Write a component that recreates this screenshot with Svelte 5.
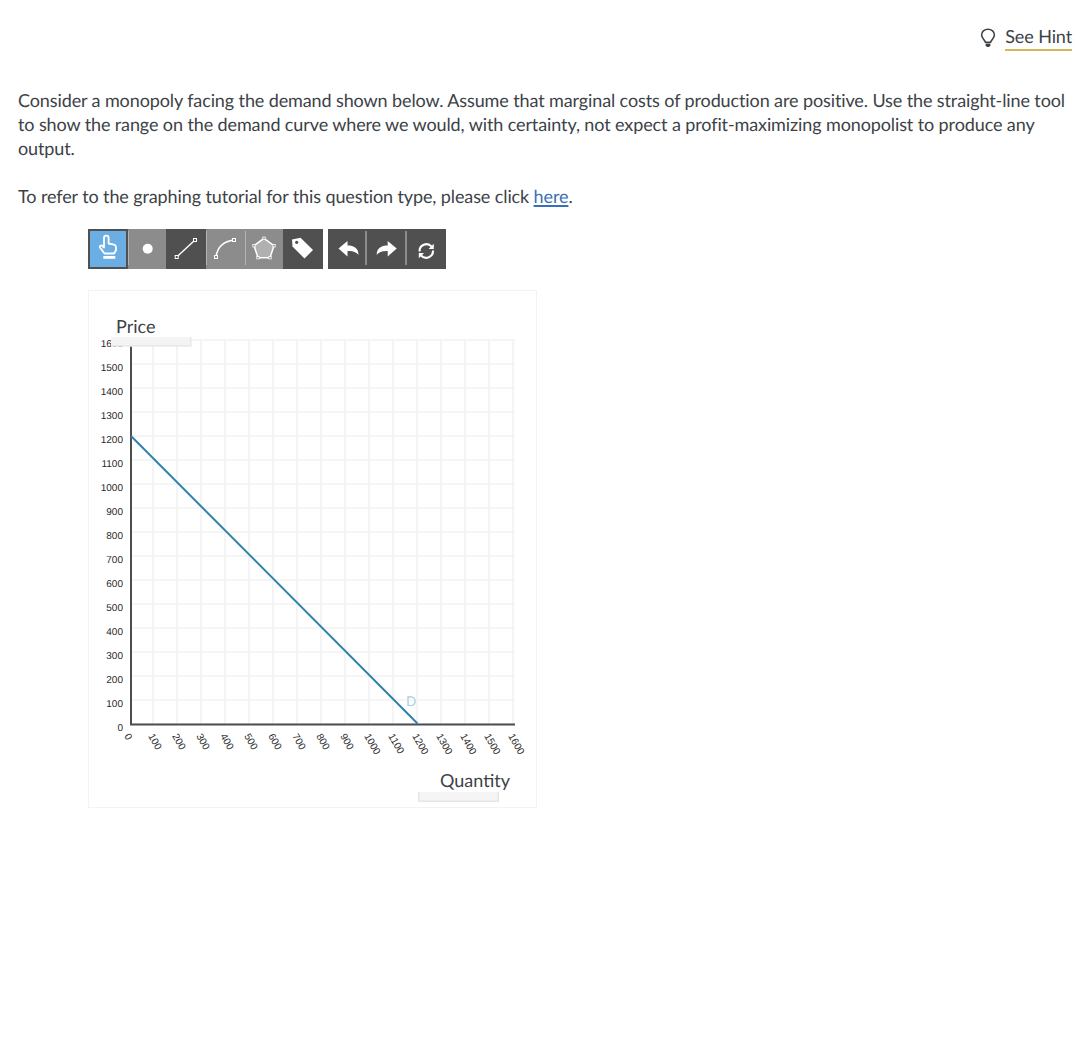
<script>
  const vals = Array.from({ length: 17 }, (_, i) => i * 100);
  const px = (v) => 41 + v * 0.24;
  const py = (v) => 434 - v * 0.24;
</script>

<div class="page">
  <div class="hint-row">
    <a class="hint" href="#hint">
      <svg class="bulb" width="16" height="20" viewBox="0 0 16 20" aria-hidden="true">
        <path d="M5.400 14.200C5 11.800 1.600 10.400 1.600 7 1.600 3.600 4.400 1.200 8 1.200S14.400 3.600 14.400 7c0 3.400-3.400 4.800-3.800 7.200z" fill="none" stroke="#3d4247" stroke-width="1.600" />
        <path d="M5.600 15.600h4.800v1.600L9.200 19H6.800L5.600 17.200z" fill="#3d4247" />
      </svg>
      <span class="hint-text">See Hint</span>
    </a>
  </div>

  <p class="question">Consider a monopoly facing the demand shown below. Assume that marginal costs of production are positive. Use the straight-line tool to show the range on the demand curve where we would, with certainty, not expect a profit-maximizing monopolist to produce any output.</p>
  <p class="tutorial">To refer to the graphing tutorial for this question type, please click <a href="#here">here</a>.</p>

  <div class="toolbar">
    <div class="group tools">
      <div class="btn w40">
        <svg width="40" height="40" viewBox="0 0 40 40">
          <rect x="2" y="2" width="36" height="36" fill="#6aaee4" />
          <path d="M16.500 24.500 12 18.500c-1-1.500 1-3 2.500-1.500L16 18.500V9a2.300 2.300 0 0 1 4.600 0V14.500l5.400 1.200c1.400.4 2 1 2 2.500v3l-2 3.300z" fill="#6aaee4" stroke="#fff" stroke-width="1.800" stroke-linejoin="round" />
          <rect x="15.300" y="27" width="12" height="2.800" fill="#fff" />
        </svg>
      </div>
      <div class="btn w38 gray edge">
        <svg width="38" height="40" viewBox="0 0 38 40"><circle cx="19.700" cy="19.700" r="5" fill="#fff" /></svg>
      </div>
      <div class="btn w40">
        <svg width="40" height="40" viewBox="0 0 40 40">
          <line x1="10.700" y1="28" x2="29" y2="11" stroke="#fff" stroke-width="1.400" />
          <rect x="9.200" y="26.500" width="3" height="3" fill="#505050" stroke="#fff" />
          <rect x="27.500" y="9.500" width="3" height="3" fill="#505050" stroke="#fff" />
        </svg>
      </div>
      <div class="btn w39 gray edge">
        <svg width="39" height="40" viewBox="0 0 39 40">
          <path d="M10 28Q12 13 28 11" fill="none" stroke="#fff" stroke-width="1.500" />
          <rect x="8.500" y="26.500" width="3" height="3" fill="#8c8c8c" stroke="#fff" />
          <rect x="26.500" y="9.500" width="3" height="3" fill="#8c8c8c" stroke="#fff" />
        </svg>
      </div>
      <div class="btn w38 gray edge">
        <svg width="38" height="40" viewBox="0 0 38 40">
          <path d="M19 9.300 29 16.700 25 28.700H13L9 16.700z" fill="#b0b0b0" stroke="#fff" stroke-width="1.500" />
          <rect x="17.800" y="8.100" width="2.400" height="2.400" fill="#8c8c8c" stroke="#fff" stroke-width=".8" />
          <rect x="27.800" y="15.500" width="2.400" height="2.400" fill="#8c8c8c" stroke="#fff" stroke-width=".8" />
          <rect x="23.800" y="27.500" width="2.400" height="2.400" fill="#8c8c8c" stroke="#fff" stroke-width=".8" />
          <rect x="11.800" y="27.500" width="2.400" height="2.400" fill="#8c8c8c" stroke="#fff" stroke-width=".8" />
          <rect x="7.800" y="15.500" width="2.400" height="2.400" fill="#8c8c8c" stroke="#fff" stroke-width=".8" />
        </svg>
      </div>
      <div class="btn w40">
        <svg width="40" height="40" viewBox="0 0 40 40">
          <path d="M9 10.500 17.500 8.800 30 21 21.500 29.500 9.500 17.500z" fill="#fff" />
          <circle cx="13.700" cy="13.300" r="1.600" fill="#505050" />
        </svg>
      </div>
    </div>
    <div class="group actions">
      <div class="btn act sep">
        <svg width="38" height="40" viewBox="0 0 38 40">
          <path d="M10.500 19.500 19.500 12v4.500C26 16.500 30.500 19 30.500 26 28 22.500 24 22 19.500 22v5.500z" fill="#fff" />
        </svg>
      </div>
      <div class="btn act sep">
        <svg width="38" height="40" viewBox="0 0 38 40">
          <path d="M29.700 19.500 20.700 12v4.500C14.200 16.500 9.700 19 9.700 26 12.200 22.500 16.200 22 20.700 22v5.500z" fill="#fff" />
        </svg>
      </div>
      <div class="btn act">
        <svg width="38" height="40" viewBox="0 0 38 40">
          <path d="M12.600 22.500A6.800 6.800 0 0 1 24.500 17.500" fill="none" stroke="#fff" stroke-width="2.100" />
          <path d="M26.800 14.800V20H21.600z" fill="#fff" />
          <path d="M26 21.500A6.800 6.800 0 0 1 14.100 26.500" fill="none" stroke="#fff" stroke-width="2.100" />
          <path d="M11.800 29.200V24H17z" fill="#fff" />
        </svg>
      </div>
    </div>
  </div>

  <div class="graph-card">
    <svg width="449" height="518" viewBox="0 0 449 518">
      <g stroke="#f2f2f2" stroke-width="1.700">
        {#each vals as v}
          <line x1={43} x2={427} y1={py(v)} y2={py(v)} />
          {#if v > 0}<line x1={px(v)} x2={px(v)} y1={50} y2={434} />{/if}
        {/each}
      </g>
      <line x1="43" y1="50" x2="43" y2="435" stroke="#4d4d4d" stroke-width="2" />
      <line x1="42" y1="434.500" x2="427" y2="434.500" stroke="#4d4d4d" stroke-width="2" />
      <line x1="43" y1="146" x2="329.500" y2="433.500" stroke="#2f83ab" stroke-width="2" />
      <text x="318" y="415.700" class="d">D</text>
      {#each vals as v}
        <text x="35" y={py(v) + 7} class="tick" text-anchor="end">{v}</text>
      {/each}
      {#each vals as v}
        <text class="tick" transform={`translate(${px(v) - 5},${446}) rotate(60)`}>{v}</text>
      {/each}
      <rect x="23" y="47" width="80" height="9.500" fill="#f4f4f4" />
      <path d="M23 55.800H102.800V47" fill="none" stroke="#e8e8e8" stroke-width="1.500" />
      <text x="28" y="43" class="axis-title">Price</text>
      <rect x="330" y="502" width="81" height="10" fill="#f5f5f5" />
      <path d="M330.700 502V511.300H410.300V502" fill="none" stroke="#e6e6e6" stroke-width="1.500" />
      <text x="352" y="497" class="axis-title">Quantity</text>
    </svg>
  </div>
</div>

<style>
  :global(body) { margin: 0; background: #fff; }
  .page {
    width: 1082px;
    height: 1038px;
    box-sizing: border-box;
    padding: 0 10px 0 18px;
    font-family: Lato, "Open Sans", sans-serif;
    color: #3d4247;
    font-size: 18px;
    line-height: 24px;
    letter-spacing: -0.11px;
    overflow: hidden;
    text-rendering: geometricPrecision;
  }
  .hint-row { display: flex; justify-content: flex-end; padding-top: 24px; height: 64px; }
  .hint { display: flex; gap: 9px; color: inherit; text-decoration: none; align-items: flex-start; height: 27px; }
  .bulb { margin-top: 4px; }
  .hint-text { border-bottom: 2px solid #d6b656; padding-bottom: 1px; }
  .question { margin: 0 0 24px; }
  .tutorial { margin: 0; }
  .tutorial a { color: #3a6fb5; text-decoration: underline; text-decoration-thickness: 2px; text-underline-offset: 2px; }
  .toolbar { display: flex; gap: 5px; margin: 21px 0 0 70px; }
  .group { display: flex; height: 40px; background: #505050; }
  .actions { width: 118px; }
  .btn { height: 40px; flex: none; position: relative; }
  .w38 { width: 38px; }
  .w39 { width: 39px; }
  .w40 { width: 40px; }
  .act { flex: 1 1 0; }
  .btn.gray { background: #8c8c8c; }
  .edge::before {
    content: "";
    position: absolute;
    left: 0;
    top: 2px;
    bottom: 4px;
    width: 1px;
    background: #b4b4b4;
  }
  .sep::after {
    content: "";
    position: absolute;
    right: 0;
    top: 2px;
    bottom: 4px;
    width: 2px;
    background: #8c8c8c;
  }
  .graph-card {
    margin: 21px 0 0 70px;
    width: 449px;
    height: 518px;
    box-sizing: border-box;
    outline: 1.5px solid #f3f3f3;
    outline-offset: -1.5px;
  }
  svg { display: block; }
  .tick { font: 10px "Liberation Sans", Arial, sans-serif; fill: #2a2a2a; letter-spacing: 0; }
  .axis-title { font: 18px Lato, sans-serif; fill: #3d4247; letter-spacing: 0; }
  .d { font: 13.500px Lato, sans-serif; fill: #a9cfe3; stroke: #fff; stroke-width: 1.500px; paint-order: stroke; }
</style>
